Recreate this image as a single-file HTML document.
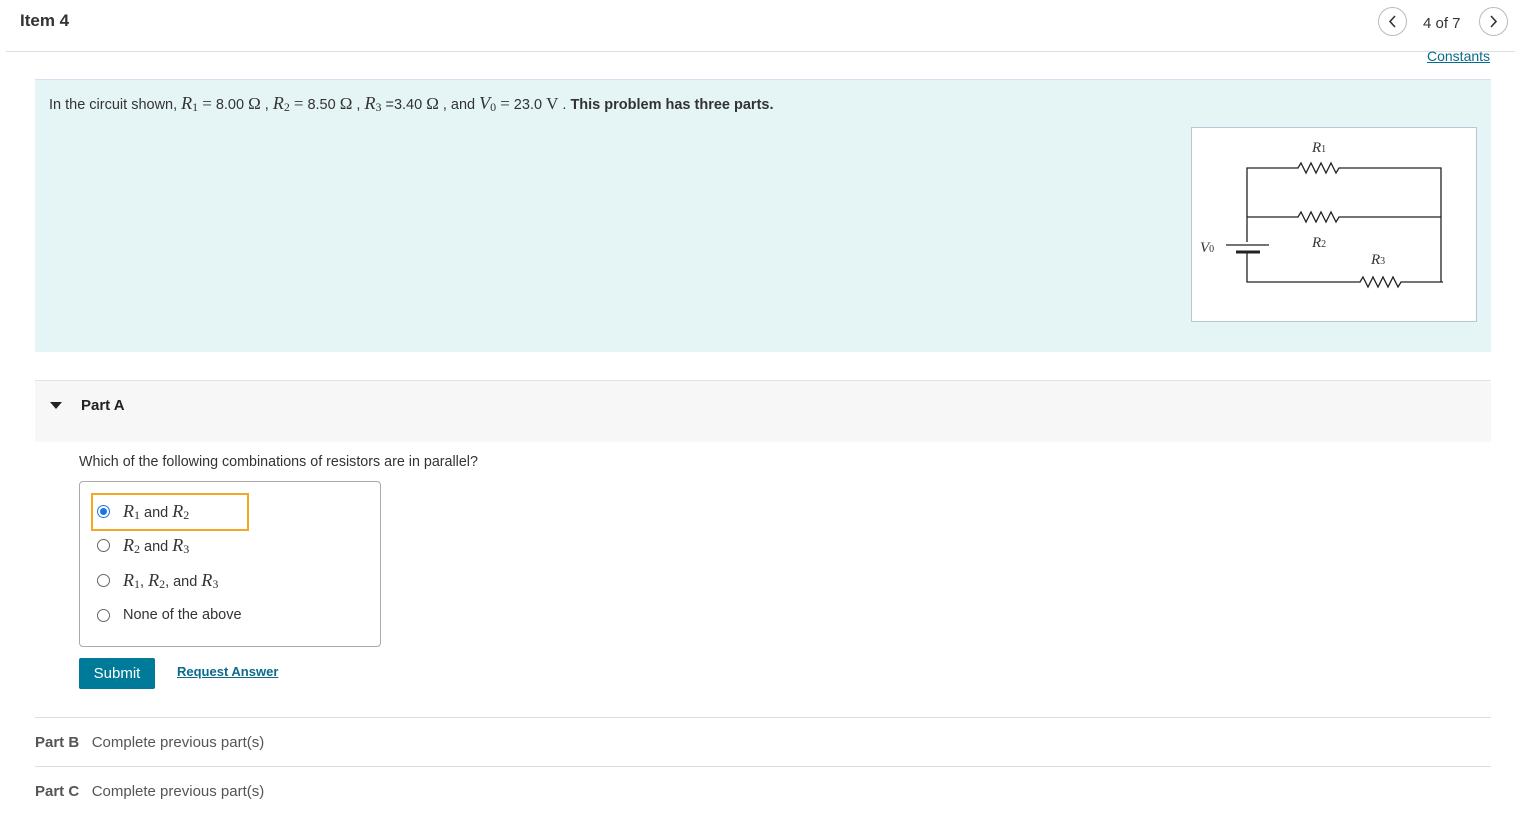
<!DOCTYPE html>
<html><head><meta charset="utf-8"><style>
body{margin:0;width:1515px;height:839px;background:#fff;font-family:"Liberation Sans",Arial,sans-serif;color:#333;position:relative;overflow:hidden}
.a{position:absolute;white-space:nowrap}
.m{font-family:"Liberation Serif",serif;font-style:italic;font-size:18px}
.m sub{font-style:normal;font-size:12px;vertical-align:-2px;line-height:0}
.n{font-family:"Liberation Serif",serif;font-size:17px}
.circ{width:29px;height:29px;border:1px solid #bbb;border-radius:50%;box-sizing:border-box}
.rad{width:13px;height:13px;border:1px solid #666;border-radius:50%;box-sizing:border-box;background:#fff}
</style></head><body>
<div class="a" style="left:20px;top:11px;font-size:17px;font-weight:bold;color:#333">Item 4</div>
<div class="a circ" style="left:1378px;top:7px"><svg width="27" height="27"><path d="M16 8l-5 5.5 5 5.5" fill="none" stroke="#333" stroke-width="1.6"/></svg></div>
<div class="a" style="left:1423px;top:15px;font-size:15px">4 of 7</div>
<div class="a circ" style="left:1479px;top:7px"><svg width="27" height="27"><path d="M11 8l5 5.5-5 5.5" fill="none" stroke="#333" stroke-width="1.6"/></svg></div>
<div class="a" style="left:6px;top:51px;width:1509px;height:1px;background:#ddd"></div>
<div class="a" style="left:1427px;top:48px;font-size:14px;color:#0a6b8a;text-decoration:underline">Constants</div>

<div class="a" style="left:35px;top:79px;width:1456px;height:272px;background:#e5f5f6;border-top:1px solid #dde"></div>
<div class="a" style="left:49px;top:93px;font-size:14.5px;color:#333">In the circuit shown, <span class="m">R<sub>1</sub></span> <span class="n">=</span> 8.00 <span class="n">Ω</span> , <span class="m">R<sub>2</sub></span> <span class="n">=</span> 8.50 <span class="n">Ω</span> , <span class="m">R<sub>3</sub></span> =3.40 <span class="n">Ω</span> , and <span class="m">V<sub>0</sub></span> <span class="n">=</span> 23.0 <span class="n">V</span> . <b>This problem has three parts.</b></div>

<svg class="a" style="left:1191px;top:127px" width="286" height="195" viewBox="1191 127 286 195">
<rect x="1191.5" y="127.5" width="285" height="194" fill="#fff" stroke="#b7c7d6"/>
<g fill="none" stroke="#222" stroke-width="1.3">
<path d="M1247 242V168H1298l3 -5 5 10 5 -10 5 10 5 -10 5 10 5 -10 5 10 3 -5H1441V282"/>
<path d="M1247 217H1298l3 -5 5 10 5 -10 5 10 5 -10 5 10 5 -10 5 10 3 -5H1441"/>
<path d="M1247 253V282H1360l3 -5 5 10 5 -10 5 10 5 -10 5 10 5 -10 5 10 3 -5H1443"/>
<path d="M1226 245H1269"/>
<path d="M1236 252H1260" stroke-width="3"/>
</g>
<g font-family="Liberation Serif,serif" font-style="italic" font-size="15" fill="#333">
<text x="1312" y="152">R<tspan font-size="10" font-style="normal">1</tspan></text>
<text x="1312" y="247">R<tspan font-size="10" font-style="normal">2</tspan></text>
<text x="1371" y="264">R<tspan font-size="10" font-style="normal">3</tspan></text>
<text x="1200" y="252">V<tspan font-size="10" font-style="normal">0</tspan></text>
</g>
</svg>

<div class="a" style="left:35px;top:380px;width:1456px;height:61px;background:#f7f7f7;border-top:1px solid #e3e3e3"></div>
<div class="a" style="left:50px;top:402px;width:0;height:0;border-left:6px solid transparent;border-right:6px solid transparent;border-top:7px solid #222"></div>
<div class="a" style="left:81px;top:397px;font-size:15px;font-weight:bold;color:#222">Part A</div>
<div class="a" style="left:79px;top:454px;font-size:14.3px;color:#333">Which of the following combinations of resistors are in parallel?</div>
<div class="a" style="left:79px;top:481px;width:300px;height:164px;border:1px solid #aaa;border-radius:4px"></div>
<div class="a" style="left:91px;top:493px;width:158px;height:38px;border:2px solid #f5a623;box-sizing:border-box"></div>
<div class="a rad" style="left:97px;top:505px;border-color:#1a73e8"><div style="margin:2px;width:7px;height:7px;border-radius:50%;background:#1a73e8"></div></div>
<div class="a rad" style="left:97px;top:539px"></div>
<div class="a rad" style="left:97px;top:574px"></div>
<div class="a rad" style="left:97px;top:609px"></div>
<div class="a" style="left:123px;top:501px;font-size:14.5px"><span class="m">R<sub>1</sub></span> and <span class="m">R<sub>2</sub></span></div>
<div class="a" style="left:123px;top:535px;font-size:14.5px"><span class="m">R<sub>2</sub></span> and <span class="m">R<sub>3</sub></span></div>
<div class="a" style="left:123px;top:570px;font-size:14.5px"><span class="m">R<sub>1</sub></span>, <span class="m">R<sub>2</sub></span>, and <span class="m">R<sub>3</sub></span></div>
<div class="a" style="left:123px;top:607px;font-size:14.5px">None of the above</div>
<div class="a" style="left:79px;top:658px;width:76px;height:31px;background:#007a99;border-radius:2px;color:#fff;font-size:15px;text-align:center;line-height:31px">Submit</div>
<div class="a" style="left:177px;top:664px;font-size:13px;font-weight:bold;color:#0a6b8a;text-decoration:underline">Request Answer</div>

<div class="a" style="left:35px;top:717px;width:1456px;height:1px;background:#ddd"></div>
<div class="a" style="left:35px;top:734px;font-size:15px;color:#555"><b>Part B</b>&nbsp;&nbsp; Complete previous part(s)</div>
<div class="a" style="left:35px;top:766px;width:1456px;height:1px;background:#ddd"></div>
<div class="a" style="left:35px;top:783px;font-size:15px;color:#555"><b>Part C</b>&nbsp;&nbsp; Complete previous part(s)</div>
</body></html>
